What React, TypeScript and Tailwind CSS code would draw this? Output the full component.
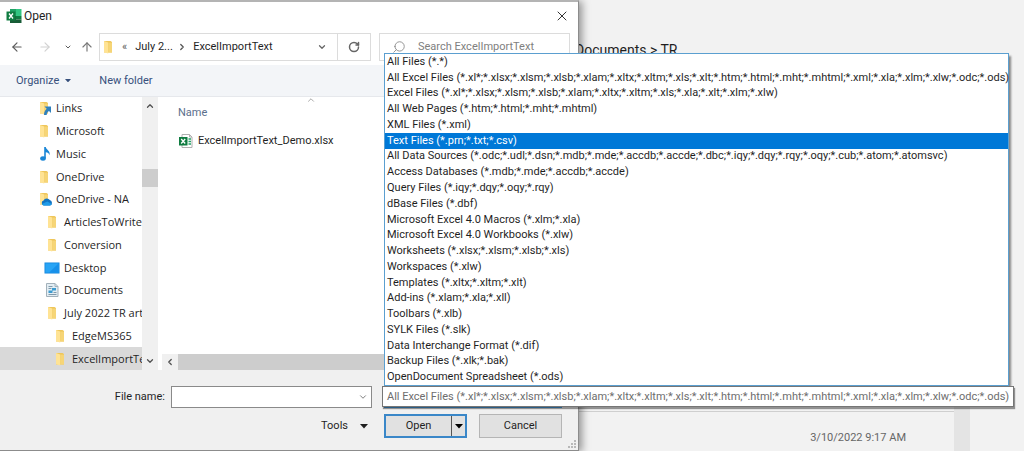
import { useState } from 'react'
import type { ReactNode } from 'react'
import { ArrowLeft, ArrowRight, ArrowUp, ChevronDown, ChevronLeft, ChevronRight, ChevronUp, RotateCw, Search, X } from 'lucide-react'

const ALL_EXCEL =
  'All Excel Files (*.xl*;*.xlsx;*.xlsm;*.xlsb;*.xlam;*.xltx;*.xltm;*.xls;*.xlt;*.htm;*.html;*.mht;*.mhtml;*.xml;*.xla;*.xlm;*.xlw;*.odc;*.ods)'

const FILE_TYPES = [
  'All Files (*.*)',
  ALL_EXCEL,
  'Excel Files (*.xl*;*.xlsx;*.xlsm;*.xlsb;*.xlam;*.xltx;*.xltm;*.xls;*.xla;*.xlt;*.xlm;*.xlw)',
  'All Web Pages (*.htm;*.html;*.mht;*.mhtml)',
  'XML Files (*.xml)',
  'Text Files (*.prn;*.txt;*.csv)',
  'All Data Sources (*.odc;*.udl;*.dsn;*.mdb;*.mde;*.accdb;*.accde;*.dbc;*.iqy;*.dqy;*.rqy;*.oqy;*.cub;*.atom;*.atomsvc)',
  'Access Databases (*.mdb;*.mde;*.accdb;*.accde)',
  'Query Files (*.iqy;*.dqy;*.oqy;*.rqy)',
  'dBase Files (*.dbf)',
  'Microsoft Excel 4.0 Macros (*.xlm;*.xla)',
  'Microsoft Excel 4.0 Workbooks (*.xlw)',
  'Worksheets (*.xlsx;*.xlsm;*.xlsb;*.xls)',
  'Workspaces (*.xlw)',
  'Templates (*.xltx;*.xltm;*.xlt)',
  'Add-ins (*.xlam;*.xla;*.xll)',
  'Toolbars (*.xlb)',
  'SYLK Files (*.slk)',
  'Data Interchange Format (*.dif)',
  'Backup Files (*.xlk;*.bak)',
  'OpenDocument Spreadsheet (*.ods)',
]

type IconName = 'folder' | 'links' | 'music' | 'onedrive' | 'desktop' | 'documents'

interface TreeItem {
  name: string
  icon: IconName
  level: 0 | 1 | 2
}

const TREE: TreeItem[] = [
  { name: 'Links', icon: 'links', level: 0 },
  { name: 'Microsoft', icon: 'folder', level: 0 },
  { name: 'Music', icon: 'music', level: 0 },
  { name: 'OneDrive', icon: 'folder', level: 0 },
  { name: 'OneDrive - NA', icon: 'onedrive', level: 0 },
  { name: 'ArticlesToWrite', icon: 'folder', level: 1 },
  { name: 'Conversion', icon: 'folder', level: 1 },
  { name: 'Desktop', icon: 'desktop', level: 1 },
  { name: 'Documents', icon: 'documents', level: 1 },
  { name: 'July 2022 TR art', icon: 'folder', level: 1 },
  { name: 'EdgeMS365', icon: 'folder', level: 2 },
  { name: 'ExcelImportText', icon: 'folder', level: 2 },
]

const INDENT = ['pl-9', 'pl-11', 'pl-13']

function FolderShape() {
  return (
    <>
      <path d="M4 2h6.5l1.5 1v10.5H4z" fill="#eec65a" />
      <path d="M4 2l4.2 1.6V14.6L4 13.2z" fill="#ffe394" />
      <path d="M8.2 3.6h3.8v9.9H8.2z" fill="#f6d577" />
    </>
  )
}

function TreeIcon({ name }: { name: IconName }) {
  const shapes: Record<IconName, ReactNode> = {
    folder: <FolderShape />,
    links: (
      <>
        <FolderShape />
        <path d="M8.5 6.5H15V13l-2-2c-1.5.9-2.3 2.2-2.3 4H8c0-2.7 1-4.7 2.700-6.200z" fill="#2f80bd" />
      </>
    ),
    music: (
      <>
        <path d="M8.2 1h1.6c.2 2.8 4.7 3.6 3.8 8.2-.6-2-2-2.8-3.8-3v6.3H8.2z" fill="#1a86d6" />
        <ellipse cx="7" cy="12.5" rx="2.8" ry="2.2" fill="#1a86d6" />
      </>
    ),
    onedrive: (
      <>
        <FolderShape />
        <path d="M8 14.5a2.5 2.5 0 0 1-.4-4.900 3.600 3.600 0 0 1 6.200-.5 2.800 2.800 0 0 1 .2 5.400z" fill="#1173c2" />
        <path d="M5.8 13l5.5-2.5 4.5 2.6a2 2 0 0 1-1.800 1.400H8c-1 0-1.800-.6-2.200-1.500z" fill="#1d9be8" />
      </>
    ),
    desktop: (
      <>
        <path d="M.5 2.5h15v11H.5z" fill="#0f82da" />
        <path d="M1.3 3.3h13.4v9.4H1.3z" fill="#28a4f5" />
        <path d="M14.7 3.3v9.4H5z" fill="#1790ea" />
      </>
    ),
    documents: (
      <>
        <path d="M2.5 1.5H11l3 3v10H2.5z" fill="#e3edf3" stroke="#a3b1ba" />
        <path d="M11 1.5v3h3" fill="none" stroke="#a3b1ba" />
        <path d="M4.500 4.500h4M4.500 6.500h3M9.500 10.500h3M4.500 12.500h8" stroke="#7f99aa" />
        <path d="M8 6h4v2.500H8zM4.500 8.500h4V11h-4z" fill="#3c9bd0" />
      </>
    ),
  }
  return (
    <svg viewBox="0 0 16 16" className="size-4 shrink-0" aria-hidden="true">
      {shapes[name]}
    </svg>
  )
}

function ExcelLogo() {
  return (
    <svg viewBox="0 0 16 16" className="size-4 shrink-0" aria-hidden="true">
      <path d="M4 1h6v7H4z" fill="#21a366" />
      <path d="M10 1h5.500v7H10z" fill="#33c481" />
      <path d="M4 8h6v7H4z" fill="#185c37" />
      <path d="M10 8h5.500v3.500H10z" fill="#107c41" />
      <path d="M10 11.500h5.500V15H10z" fill="#185c37" />
      <path d="M.5 3.500h9v9h-9z" fill="#107c41" />
      <path d="M3 5.500l4 5M7 5.500l-4 5" stroke="#fff" strokeWidth="1.3" />
    </svg>
  )
}

function ExcelFileIcon() {
  return (
    <svg viewBox="0 0 16 16" className="size-4 shrink-0" aria-hidden="true">
      <path d="M4 1.500h7.500l2.500 2.500v10.500H4z" fill="#fff" stroke="#b0b0b0" />
      <path d="M11.500 1.500V4H14" fill="none" stroke="#b0b0b0" />
      <path d="M10.500 6h2.500M10.500 8.500h2.500M10.500 11h2.500" stroke="#21a366" strokeWidth="1.3" />
      <path d="M1 4h8.500v8.500H1z" fill="#107c41" />
      <path d="M3.200 6l4 4.500M7.200 6l-4 4.500" stroke="#fff" strokeWidth="1.3" />
    </svg>
  )
}

function Caret({ className }: { className: string }) {
  return (
    <svg viewBox="0 0 8 5" className={className} aria-hidden="true">
      <path d="M0 0h8L4 4.500z" fill="currentColor" />
    </svg>
  )
}

function AddressRow() {
  return (
    <div className="flex h-7 items-stretch pl-2.5 pr-2">
      <div className="flex w-[89px] shrink-0 items-center text-[#5c5c5c]">
        <button type="button" aria-label="Back"><ArrowLeft className="size-3.5" /></button>
        <button type="button" aria-label="Forward" className="ml-3.5 text-[#d2d2d2]"><ArrowRight className="size-3.5" /></button>
        <button type="button" aria-label="Recent locations" className="ml-3"><ChevronDown className="size-2" strokeWidth={3} /></button>
        <button type="button" aria-label="Up" className="ml-2 text-[#777]"><ArrowUp className="size-3.5" /></button>
      </div>
      <nav aria-label="Address" className="flex w-[272px] shrink-0 border border-[#dcdcdc]">
        <div className="flex flex-1 items-center">
          <svg viewBox="0 0 16 16" className="size-4 shrink-0" aria-hidden="true"><FolderShape /></svg>
          <span className="ml-1.5 text-[#555]">«</span>
          <a href="#" className="ml-2 w-9 whitespace-nowrap">July 2...</a>
          <ChevronRight className="mx-1.5 size-2.5 text-[#555]" strokeWidth={3} />
          <a href="#">ExcelImportText</a>
        </div>
        <button type="button" aria-label="Previous locations" className="px-2.5 text-[#666]">
          <ChevronDown className="size-2.5" strokeWidth={3} />
        </button>
        <button type="button" aria-label="Refresh" className="border-l border-[#dcdcdc] px-2.5 text-[#666]">
          <RotateCw className="size-3" strokeWidth={3} />
        </button>
      </nav>
      <label className="ml-2 flex flex-1 items-center border border-[#dcdcdc] pl-3 text-[#888]">
        <Search className="size-3.5 shrink-0 -scale-x-100" strokeWidth={1.5} />
        <input
          type="search"
          aria-label="Search ExcelImportText"
          placeholder="Search ExcelImportText"
          className="ml-3 w-full min-w-0 bg-transparent outline-none placeholder:text-[#808080]"
        />
      </label>
    </div>
  )
}

function FolderTree() {
  const [current, setCurrent] = useState('ExcelImportText')

  return (
    <div className="flex w-[158px] shrink-0">
      <ul className="flex min-w-0 flex-1 flex-col font-['Open_Sans',sans-serif]">
        {TREE.map((item) => (
          <li key={item.name} className="flex flex-1">
            <button
              type="button"
              onClick={() => setCurrent(item.name)}
              className={`flex w-full items-center gap-1 overflow-hidden whitespace-nowrap ${INDENT[item.level]} ${
                current === item.name ? 'bg-[#d9d9d9]' : ''
              }`}
            >
              <TreeIcon name={item.icon} />
              {item.name}
            </button>
          </li>
        ))}
      </ul>
      <div className="flex w-4 flex-col items-center bg-[#f0f0f0] py-1 text-[#505050]">
        <ChevronUp className="size-2.5" strokeWidth={3} />
        <div className="mt-[58px] h-4.5 w-full bg-[#cdcdcd]" />
        <ChevronDown className="mt-auto size-2.5" strokeWidth={3} />
      </div>
    </div>
  )
}

function FilePane() {
  return (
    <div className="ml-1 flex min-w-0 flex-1 flex-col">
      <div className="flex flex-1 flex-col px-4">
        <ChevronUp className="-mt-0.5 ml-32 size-2.5 text-[#999]" strokeWidth={2} />
        <button type="button" className="self-start leading-4 text-[#5b6f8c]">Name</button>
        <button type="button" className="mt-3 flex items-center gap-1 self-start">
          <ExcelFileIcon />
          ExcelImportText_Demo.xlsx
        </button>
      </div>
      <div className="flex h-4 items-center bg-[#cdcdcd]">
        <div className="flex h-full w-4 items-center justify-center bg-[#f0f0f0] text-[#505050]">
          <ChevronLeft className="size-2.5" strokeWidth={3} />
        </div>
      </div>
    </div>
  )
}

function FileTypePicker() {
  const [highlighted, setHighlighted] = useState('Text Files (*.prn;*.txt;*.csv)')

  return (
    <div className="relative ml-3 w-[178px] shrink-0">
      <select aria-label="Files of type" defaultValue={ALL_EXCEL} className="h-5.5 w-full border border-[#0078d7] bg-white px-1 opacity-70">
        <option>{ALL_EXCEL}</option>
      </select>
      <ul
        role="listbox"
        aria-label="File types"
        className="absolute bottom-full left-0 z-10 flex h-[333px] w-[625px] flex-col border border-[#5b9fd0] bg-white shadow-[2px_3px_2px_rgba(0,0,0,0.45)]"
      >
        {FILE_TYPES.map((type) => (
          <li
            key={type}
            role="option"
            aria-selected={type === highlighted}
            onMouseEnter={() => setHighlighted(type)}
            className={`flex min-h-0 flex-1 items-center pl-0.5 leading-[14px] whitespace-nowrap ${
              type === highlighted ? 'bg-[#0078d7] text-white' : ''
            }`}
          >
            {type}
          </li>
        ))}
      </ul>
      <div
        role="tooltip"
        className="absolute top-0 -left-0.5 z-20 border border-[#767676] bg-white px-1 pt-px leading-[18px] whitespace-nowrap text-[#6d6d6d] shadow-[1px_2px_1px_rgba(0,0,0,0.4)]"
      >
        {ALL_EXCEL}
      </div>
    </div>
  )
}

function DialogFooter() {
  return (
    <div className="flex flex-col gap-1.5 bg-[#f0f0f0] pt-4 pr-4 pb-3">
      <div className="flex items-center justify-end">
        <label htmlFor="file-name">File name:</label>
        <div className="relative ml-1.5 w-[201px]">
          <input id="file-name" className="h-5.5 w-full border border-[#8a8a8a] bg-white px-1 outline-none" />
          <ChevronDown className="absolute top-1.5 right-1 size-2.5 text-[#666]" />
        </div>
        <FileTypePicker />
      </div>
      <div className="flex h-6 items-stretch justify-end">
        <button type="button" className="mr-4 flex items-center gap-3">
          Tools
          <Caret className="w-2" />
        </button>
        <div className="flex w-[83px] border-2 border-[#3a87c8] bg-[#e1e1e1]">
          <button type="button" className="flex-1">Open</button>
          <button type="button" aria-label="More open options" className="flex w-3.5 items-center justify-center border-l border-[#555] text-black">
            <Caret className="w-2" />
          </button>
        </div>
        <button type="button" className="ml-3 w-[83px] border border-[#b5b5b5] bg-[#e1e1e1]">Cancel</button>
      </div>
    </div>
  )
}

function OpenDialog() {
  return (
    <div
      role="dialog"
      aria-label="Open"
      className="absolute top-0 left-0 w-[579px] border-t-2 border-r border-b border-t-[#b4b4b4] border-r-[#8c8c8c] border-b-[#8c8c8c] bg-white shadow-[3px_1px_8px_rgba(0,0,0,0.4)]"
    >
      <div className="flex h-[31px] items-start justify-between pt-1.5 pr-2 pl-1.5">
        <div className="flex items-center gap-0.5 text-xs">
          <ExcelLogo />
          <span>Open</span>
        </div>
        <button type="button" aria-label="Close"><X className="size-4 text-[#333]" strokeWidth={1.5} /></button>
      </div>
      <AddressRow />
      <div className="mt-1 flex h-8 items-center gap-7 border-b border-[#e6e8ec] bg-[#f3f5f8] pl-4 text-[#37507c]">
        <button type="button" className="flex items-center gap-1.5">
          Organize
          <Caret className="w-1.5" />
        </button>
        <button type="button">New folder</button>
      </div>
      <div className="flex h-[273px]">
        <FolderTree />
        <FilePane />
      </div>
      <DialogFooter />
      <svg viewBox="0 0 8 8" className="absolute right-0.5 bottom-0.5 size-2" aria-hidden="true">
        <path d="M6 0h2v2H6zM3 3h2v2H3zM6 3h2v2H6zM0 6h2v2H0zM3 6h2v2H3zM6 6h2v2H6z" fill="#b8b8b8" />
      </svg>
    </div>
  )
}

export default function App() {
  return (
    <div className="relative min-h-screen overflow-hidden bg-[#f2f2f2] font-[Roboto,'Open_Sans',sans-serif] text-[11px] leading-4 text-[#1f1f1f]">
      {/* Excel start screen behind the dialog */}
      <main className="flex min-h-screen flex-col justify-between">
        <p className="pt-10 pl-[575px] text-sm">Documents &gt; TR</p>
        <div className="flex h-[52px] pr-[54px] text-[#666]">
          <div className="mt-3 flex-1 border-t border-[#cfcfcf] pt-4 pr-12 text-right leading-5">3/10/2022 9:17 AM</div>
          <div className="w-4 bg-[#e4e4e4]" />
        </div>
      </main>
      <OpenDialog />
    </div>
  )
}
